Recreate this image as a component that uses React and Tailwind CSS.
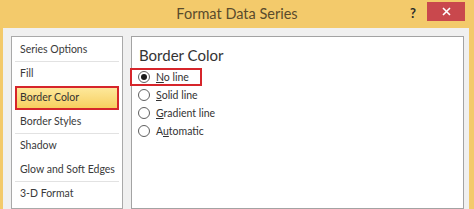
import React from "react";

const font = { fontFamily: 'Lato, "Open Sans", sans-serif' };

function Radio({ checked, children }) {
  return (
    <div className="flex h-[18px] items-center">
      <span className="flex h-[12px] w-[12px] items-center justify-center rounded-full border border-[#5f5f5f] bg-white">
        {checked && <span className="h-[6px] w-[6px] rounded-full bg-[#1a1a1a]" />}
      </span>
      <span className="ml-[6px] whitespace-nowrap text-[10.5px] leading-none text-[#333333]">{children}</span>
    </div>
  );
}

function Item({ children, sep, active }) {
  if (active) {
    return (
      <div className="mx-[3px] flex h-[24px] items-center whitespace-nowrap border-2 border-[#d6252b] bg-gradient-to-b from-[#fde89a] to-[#f7cf5e] pl-[3px] text-[10.5px] text-[#333333]">
        {children}
      </div>
    );
  }
  return (
    <div
      className={
        "mx-[3px] flex h-[24px] items-center whitespace-nowrap border-b pl-[5px] text-[10.5px] text-[#3a3a3a] " +
        (sep ? "border-[#e2e2e2]" : "border-transparent")
      }
    >
      {children}
    </div>
  );
}

export default function App() {
  return (
    <div className="flex h-[209px] w-[474px] flex-col overflow-hidden bg-[#f3ca6b]" style={font}>
      <div className="relative flex h-[28px] shrink-0 items-center justify-center">
        <span className="text-[14.5px] text-[#5a4a2c]">Format Data Series</span>
        <span className="absolute left-[410px] top-[4px] text-[13px] font-bold text-[#2a2a2a]">?</span>
        <div className="absolute left-[427px] top-[2px] flex h-[19px] w-[38px] items-center justify-center bg-[#c9484d]">
          <svg width="9" height="9" viewBox="0 0 9 9">
            <path d="M1 1L8 8M8 1L1 8" stroke="#ffffff" strokeWidth="1.6" />
          </svg>
        </div>
      </div>
      <div className="ml-[3px] mr-[5px] flex flex-1 gap-[8px] bg-[#f0f0f0] pl-[8px] pr-[5px] pt-[8px]">
        <div className="w-[112px] shrink-0 border border-[#a9a9a9] bg-white pt-[1px]">
          <Item sep>Series Options</Item>
          <Item>Fill</Item>
          <Item active>Border Color</Item>
          <Item sep>Border Styles</Item>
          <Item>Shadow</Item>
          <Item sep>Glow and Soft Edges</Item>
          <Item>3-D Format</Item>
        </div>
        <div className="relative flex-1 border border-[#a3a3a3] bg-white pl-[6px] pt-[8px]">
          <div className="ml-[1px] h-[20px] text-[15px] leading-[20px] text-[#333333]">Border Color</div>
          <div className="mt-[3px] flex flex-col">
            <Radio checked>
              <span className="underline">N</span>o line
            </Radio>
            <Radio>
              <span className="underline">S</span>olid line
            </Radio>
            <Radio>
              <span className="underline">G</span>radient line
            </Radio>
            <Radio>
              A<span className="underline">u</span>tomatic
            </Radio>
          </div>
          <div className="absolute left-[-2px] top-[31px] h-[18px] w-[72px] border-2 border-[#d6252b]" />
        </div>
      </div>
    </div>
  );
}
